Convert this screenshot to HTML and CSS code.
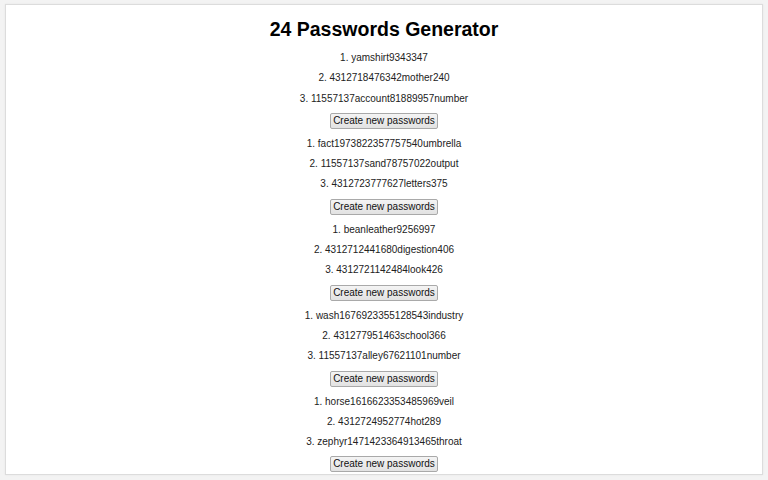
FILE: index.html
```html
<!DOCTYPE html>
<html>
<head>
<meta charset="utf-8">
<link rel="stylesheet" href="styles.css">
</head>
<body>
<div class="card">
  <h1 class="title">24 Passwords Generator</h1>
  <div class="group">
    <div class="pw">1. yamshirt9343347</div>
    <div class="pw">2. 4312718476342mother240</div>
    <div class="pw">3. 11557137account81889957number</div>
    <div class="btnrow"><button class="btn">Create new passwords</button></div>
  </div>
  <div class="group">
    <div class="pw">1. fact1973822357757540umbrella</div>
    <div class="pw">2. 11557137sand78757022output</div>
    <div class="pw">3. 4312723777627letters375</div>
    <div class="btnrow"><button class="btn">Create new passwords</button></div>
  </div>
  <div class="group">
    <div class="pw">1. beanleather9256997</div>
    <div class="pw">2. 4312712441680digestion406</div>
    <div class="pw">3. 4312721142484look426</div>
    <div class="btnrow"><button class="btn">Create new passwords</button></div>
  </div>
  <div class="group">
    <div class="pw">1. wash1676923355128543industry</div>
    <div class="pw">2. 431277951463school366</div>
    <div class="pw">3. 11557137alley67621101number</div>
    <div class="btnrow"><button class="btn">Create new passwords</button></div>
  </div>
  <div class="group">
    <div class="pw">1. horse1616623353485969veil</div>
    <div class="pw">2. 4312724952774hot289</div>
    <div class="pw">3. zephyr1471423364913465throat</div>
    <div class="btnrow"><button class="btn">Create new passwords</button></div>
  </div>
</div>
</body>
</html>
```
FILE: styles.css
```css
html, body {
  margin: 0;
  padding: 0;
}
body {
  background: #f3f3f3;
  font-family: "Liberation Sans", Arial, sans-serif;
  color: #222;
  padding: 4px 5px 5px 5px;
  height: 480px;
  box-sizing: border-box;
}
.card {
  background: #fff;
  border: 1px solid #dcdcdc;
  box-shadow: 0 0 2px rgba(0,0,0,0.06);
  height: 471px;
  box-sizing: border-box;
  text-align: center;
  overflow: hidden;
}
.title {
  margin: 0;
  padding-top: 12px;
  height: 31px;
  font-size: 19.5px;
  line-height: 24px;
  font-weight: bold;
  color: #000;
}
.group {
  display: flex;
  flex-direction: column;
}
.pw {
  height: 20.3px;
  line-height: 20px;
  font-size: 10px;
}
.btnrow {
  height: 25px;
  padding-top: 4px;
  box-sizing: border-box;
}
.btn {
  display: block;
  margin: 0 auto;
  font-family: "Liberation Sans", Arial, sans-serif;
  font-size: 10px;
  height: 16px;
  width: 108px;
  padding: 0;
  line-height: 14px;
  color: #111;
  background: linear-gradient(#f4f4f4, #e2e2e2);
  border: 1px solid #a9a9a9;
  border-radius: 2px;
}
```
